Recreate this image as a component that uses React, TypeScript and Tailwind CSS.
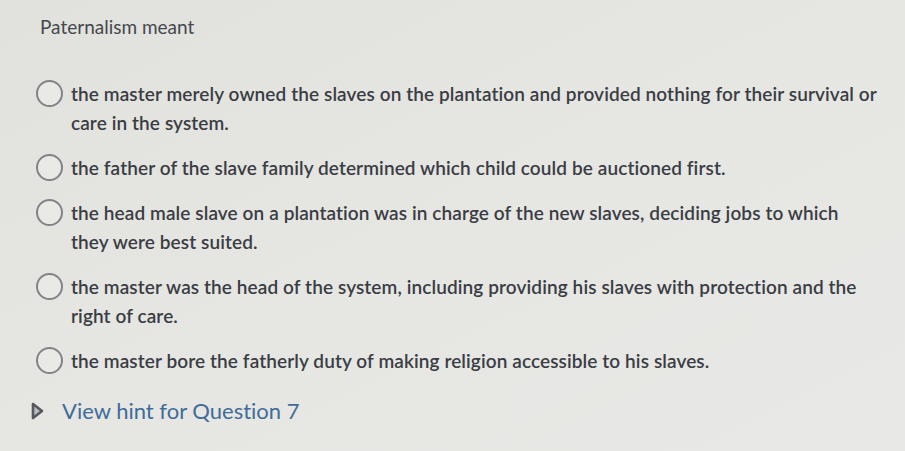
import React from "react";

const options: string[][] = [
  [
    "the master merely owned the slaves on the plantation and provided nothing for their survival or",
    "care in the system.",
  ],
  ["the father of the slave family determined which child could be auctioned first."],
  [
    "the head male slave on a plantation was in charge of the new slaves, deciding jobs to which",
    "they were best suited.",
  ],
  [
    "the master was the head of the system, including providing his slaves with protection and the",
    "right of care.",
  ],
  ["the master bore the fatherly duty of making religion accessible to his slaves."],
];

function Radio() {
  return (
    <span className="mt-[1px] block h-[27px] w-[27px] shrink-0 rounded-full border-2 border-[#808387] bg-[#e9e9e6]" />
  );
}

export default function App() {
  return (
    <div
      className="h-[451px] w-[905px] overflow-hidden bg-gradient-to-br from-[#e1e1dd] via-[#e6e6e3] to-[#e8e8e6] text-[#3a3d43] [font-variant-ligatures:none]"
      style={{ fontFamily: "Lato, 'Open Sans', sans-serif" }}
    >
      <div className="pl-[40px] pt-[15px]">
        <p className="text-[19px] leading-[24px] text-[#45484d]">Paternalism meant</p>
      </div>

      <ul className="mt-[40px] flex flex-col gap-[16px] pl-[36px] pr-[10px]">
        {options.map((lines) => (
          <li key={lines[0]} className="flex items-start gap-[8px]">
            <Radio />
            <span className="text-[19px] font-semibold leading-[29px] tracking-[0.1px]">
              {lines.map((l) => (
                <span key={l} className="block whitespace-nowrap">
                  {l}
                </span>
              ))}
            </span>
          </li>
        ))}
      </ul>

      <div className="mt-[22px] flex items-center gap-[18px] pl-[31px]">
        <svg width="13" height="18" viewBox="0 0 13 18" className="shrink-0">
          <polygon points="2,2 11,9 2,16" fill="#b9bbbd" stroke="#55585d" strokeWidth="2.6" strokeLinejoin="round" />
        </svg>
        <span className="text-[22px] leading-[28px] text-[#3f6c98]">View hint for Question 7</span>
      </div>
    </div>
  );
}
